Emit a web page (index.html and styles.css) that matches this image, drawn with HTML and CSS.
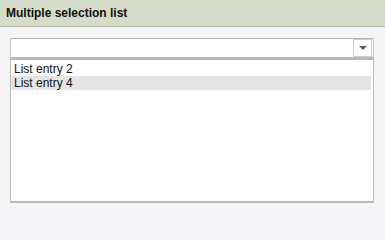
FILE: index.html
```html
<!DOCTYPE html>
<html>
<head>
<meta charset="utf-8">
<link rel="stylesheet" href="styles.css">
</head>
<body>
<div class="panel">
  <div class="header">Multiple selection list</div>
  <div class="content">
    <div class="combo">
      <div class="combo-input"></div>
      <div class="combo-btn"><span class="arrow"></span></div>
    </div>
    <div class="list">
      <div class="item">List entry 2</div>
      <div class="item selected">List entry 4</div>
    </div>
  </div>
</div>
</body>
</html>
```
FILE: styles.css
```css
html, body {
  margin: 0;
  padding: 0;
}
body {
  width: 385px;
  height: 215px;
  background: #f5f5f7;
  font-family: "Liberation Sans", Arial, sans-serif;
  overflow: hidden;
}
.panel {
  display: flex;
  flex-direction: column;
}
.header {
  height: 26px;
  background: #d5ddc9;
  border-bottom: 1px solid #b3b7ad;
  font-weight: bold;
  font-size: 12px;
  line-height: 27px;
  padding-left: 6px;
  color: #111;
}
.content {
  padding: 11px 11px 0 10px;
}
.combo {
  display: flex;
  height: 18px;
  background: #fff;
  border: 1px solid #c6c6c6;
  border-top: 1px solid #b4b4b4;
  border-bottom: 3px solid #b8b8b8;
}
.combo-input {
  flex: 1;
}
.combo-btn {
  width: 17px;
  margin: 0 1px 0 0;
  border: 1px solid #cdcdcd;
  display: flex;
  align-items: center;
  justify-content: center;
}
.arrow {
  width: 0;
  height: 0;
  border-left: 4px solid transparent;
  border-right: 4px solid transparent;
  border-top: 4px solid #5a5a5a;
}
.list {
  height: 139px;
  background: #fff;
  border: 1px solid #bcbcbc;
  border-top: none;
  border-bottom: 2px solid #b8b8b8;
  padding: 2px 2px 0 0;
}
.item {
  height: 14px;
  line-height: 14px;
  font-size: 12px;
  padding-left: 3px;
  color: #111;
}
.item.selected {
  background: #e5e5e5;
}
```
